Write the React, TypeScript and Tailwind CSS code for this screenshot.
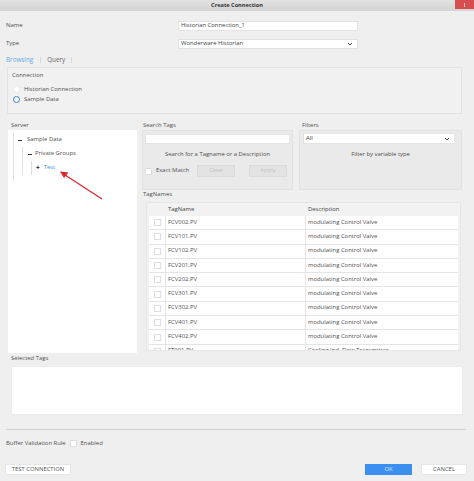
import React from "react";

const rows = [
  ["FCV002.PV", "modulating Control Valve"],
  ["FCV101.PV", "modulating Control Valve"],
  ["FCV102.PV", "modulating Control Valve"],
  ["FCV201.PV", "modulating Control Valve"],
  ["FCV202.PV", "modulating Control Valve"],
  ["FCV301.PV", "modulating Control Valve"],
  ["FCV302.PV", "modulating Control Valve"],
  ["FCV401.PV", "modulating Control Valve"],
  ["FCV402.PV", "modulating Control Valve"],
  ["FT001.PV", "Cooling Ind. Flow Transmitter"],
];

function Chevron() {
  return (
    <svg width="6" height="4" viewBox="0 0 6 4" className="shrink-0">
      <path d="M1 1 L3 3 L5 1" fill="none" stroke="#444" strokeWidth="1" />
    </svg>
  );
}

function Box() {
  return <span className="inline-block w-[7px] h-[7px] bg-white border border-[#dedede] shrink-0" />;
}

export default function App() {
  return (
    <div
      className="relative w-[474px] h-[481px] overflow-hidden bg-[#efefef] text-[#505050] text-[5.9px] leading-none flex flex-col"
      style={{ fontFamily: '"Open Sans", "Noto Sans", sans-serif' }}
    >
      {/* title bar */}
      <div className="relative h-[11px] shrink-0 bg-gradient-to-b from-[#e2e2e2] to-[#d4d4d4] flex items-center justify-center">
        <span className="font-bold text-[#333] text-[5.6px]">Create Connection</span>
        <div className="absolute right-0 top-0 w-[19px] h-[9px] bg-[#d64e4e] flex items-center justify-center">
          <span className="w-[1px] h-[4px] bg-[#f3c2c2]" />
        </div>
      </div>

      <div className="flex flex-col pl-[6px] pr-[8px]">
        {/* Name */}
        <div className="mt-[10px] h-[10px] flex items-center">
          <span className="w-[172px]">Name</span>
          <div className="w-[180px] h-[10px] bg-white border border-[#e2e2e2] flex items-center pl-[2px] text-[#444]">
            Historian Connection_1
          </div>
        </div>
        {/* Type */}
        <div className="mt-[8px] h-[10px] flex items-center">
          <span className="w-[172px]">Type</span>
          <div className="w-[180px] h-[10px] bg-white border border-[#e2e2e2] flex items-center justify-between pl-[2px] pr-[4px] text-[#444]">
            <span>Wonderware Historian</span>
            <Chevron />
          </div>
        </div>
        {/* Tabs */}
        <div className="mt-[7px] h-[8px] flex items-center text-[6.3px]">
          <span className="text-[#6aaae0]">Browsing</span>
          <span className="ml-[7px] w-[1px] h-[6px] bg-[#d8d8d8]" />
          <span className="ml-[6px] text-[#666]">Query</span>
          <span className="ml-[6px] w-[1px] h-[6px] bg-[#d8d8d8]" />
        </div>

        {/* Connection group */}
        <div className="mt-[3px] h-[47px] ml-[1px] mr-[4px] bg-[#f1f1f1] border border-[#e4e4e4] flex flex-col pl-[4px]">
          <div className="mt-[4px] h-[7px] flex items-center">Connection</div>
          <div className="mt-[6px] h-[9px] flex items-center">
            <span className="ml-[1px] w-[7px] h-[7px] rounded-full bg-white border border-[#eaeaea]" />
            <span className="ml-[4px]">Historian Connection</span>
          </div>
          <div className="mt-[1px] h-[9px] flex items-center">
            <span className="ml-[1px] w-[7px] h-[7px] rounded-full bg-white border-[1.5px] border-[#2f7fd0]" />
            <span className="ml-[4px]">Sample Data</span>
          </div>
        </div>

        {/* Middle */}
        <div className="mt-[8px] flex">
          {/* Server */}
          <div className="ml-[2px] w-[129px] flex flex-col">
            <div className="h-[8px] flex items-center pl-[3px]">Server</div>
            <div className="h-[223px] bg-white pt-[3px]">
              <div className="ml-[5px] border-l border-[#e0e0e0] pl-[4px] pb-[6px]">
                <div className="h-[14px] flex items-center">
                  <span className="w-[4px] h-[1px] bg-[#333]" />
                  <span className="ml-[5px]">Sample Data</span>
                </div>
                <div className="ml-[4px] border-l border-[#e0e0e0] pl-[5px]">
                  <div className="h-[14px] flex items-center">
                    <span className="w-[4px] h-[1px] bg-[#333]" />
                    <span className="ml-[3px]">Private Groups</span>
                  </div>
                  <div className="ml-[3px] border-l border-[#e0e0e0] pl-[4px]">
                    <div className="h-[14px] flex items-center">
                      <span className="font-bold text-[#222] text-[6.5px]">+</span>
                      <span className="ml-[4px] text-[#3b8fdb]">Test</span>
                    </div>
                  </div>
                </div>
              </div>
            </div>
          </div>

          {/* Right column */}
          <div className="ml-[5px] w-[320px] flex flex-col">
            <div className="flex gap-[6px]">
              <div className="w-[151px] flex flex-col">
                <div className="h-[8px] flex items-center pl-[1px]">Search Tags</div>
                <div className="h-[60px] bg-[#eaeaea] border border-[#e2e2e2] flex flex-col px-[2px]">
                  <div className="mt-[3px] h-[10px] bg-white border border-[#e4e4e4]" />
                  <div className="mt-[7px] h-[8px] flex items-center justify-center">
                    Search for a Tagname or a Description
                  </div>
                  <div className="mt-[6px] h-[12px] flex items-center">
                    <Box />
                    <span className="ml-[4px]">Exact Match</span>
                    <div className="ml-auto w-[38px] h-[12px] bg-[#e3e3e3] border border-[#dcdcdc] flex items-center justify-center text-[#c4c4c4]">
                      Clear
                    </div>
                    <div className="ml-[14px] mr-[3px] w-[38px] h-[12px] bg-[#e3e3e3] border border-[#dcdcdc] flex items-center justify-center text-[#c4c4c4]">
                      Apply
                    </div>
                  </div>
                </div>
              </div>
              <div className="w-[163px] flex flex-col">
                <div className="h-[8px] flex items-center pl-[3px]">Filters</div>
                <div className="h-[60px] bg-[#eaeaea] border border-[#e2e2e2] flex flex-col px-[3px]">
                  <div className="mt-[2px] h-[11px] w-[152px] bg-white border border-[#e4e4e4] flex items-center justify-between pl-[2px] pr-[4px] text-[#444]">
                    <span>All</span>
                    <Chevron />
                  </div>
                  <div className="mt-[7px] h-[8px] flex items-center justify-center">Filter by variable type</div>
                </div>
              </div>
            </div>

            <div className="mt-[1px] h-[8px] flex items-center pl-[1px]">TagNames</div>
            <div className="mt-[3px] ml-[4px] w-[315px] h-[149px] overflow-hidden bg-[#f2f2f2] border border-[#e6e6e6] flex flex-col">
              <div className="h-[13px] shrink-0 flex items-center text-[#444]">
                <span className="w-[19px]" />
                <span className="w-[140px] pl-[2px]">TagName</span>
                <span className="pl-[2px]">Description</span>
              </div>
              {rows.map(([t, d]) => (
                <div key={t} className="h-[14.3px] shrink-0 flex items-stretch bg-white border-b border-[#e4e4e4] ml-[2px] mr-[2px]">
                  <span className="w-[17px] flex items-center justify-center border-r border-[#e4e4e4]">
                    <Box />
                  </span>
                  <span className="w-[140px] flex items-center pl-[2px] border-r border-[#e4e4e4]">{t}</span>
                  <span className="flex items-center pl-[2px]">{d}</span>
                </div>
              ))}
            </div>
          </div>
        </div>

        {/* Selected Tags */}
        <div className="mt-[2px] h-[8px] flex items-center pl-[5px]">Selected Tags</div>
        <div className="mt-[3px] ml-[5px] w-[452px] h-[49px] bg-white border border-[#ececec]" />

        <div className="mt-[14px] h-[1px] bg-[#cfcfcf]" />

        <div className="mt-[10px] h-[8px] flex items-center">
          <span>Buffer Validation Rule</span>
          <span className="ml-[4px]"><Box /></span>
          <span className="ml-[4px]">Enabled</span>
        </div>

        <div className="mt-[16px] h-[11px] flex items-center">
          <div className="-ml-[1px] w-[66px] h-[11px] bg-white border border-[#e6e6e6] flex items-center justify-center text-[#555]">
            TEST CONNECTION
          </div>
          <div className="ml-auto w-[47px] h-[11px] bg-[#3a8fef] flex items-center justify-center text-[#d8e8fb]">OK</div>
          <div className="ml-[9px] mr-[-1px] w-[46px] h-[11px] bg-white border border-[#e6e6e6] flex items-center justify-center">
            CANCEL
          </div>
        </div>
      </div>

      {/* annotation arrow */}
      <svg className="absolute left-0 top-0 pointer-events-none" width="474" height="481">
        <line x1="102" y1="199" x2="62" y2="173" stroke="#e0242a" strokeWidth="1.2" />
        <path d="M60 171.5 L68.5 172.5 L64 178 Z" fill="#e0242a" />
      </svg>
    </div>
  );
}
